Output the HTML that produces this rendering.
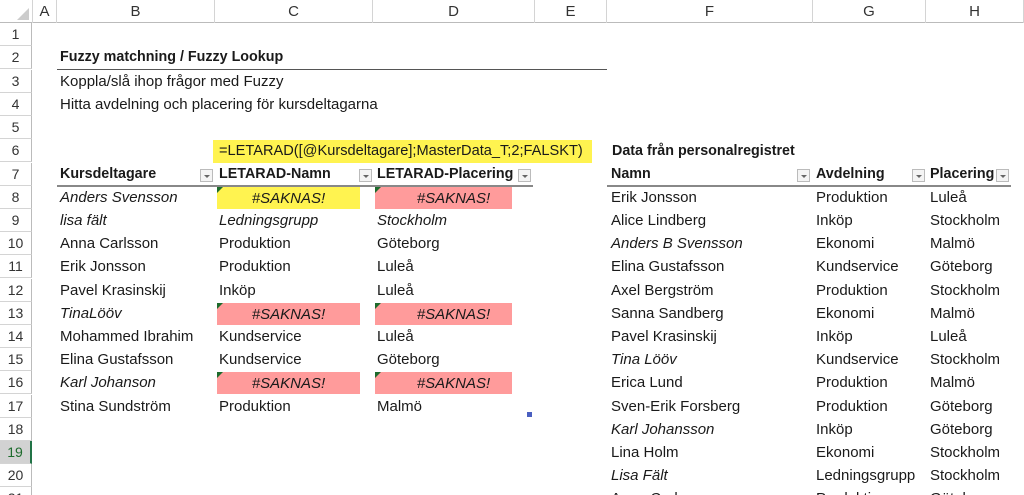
<!DOCTYPE html>
<html><head><meta charset="utf-8"><style>
html,body{margin:0;width:1024px;height:495px;overflow:hidden}
body{background:#fff;font-family:"Liberation Sans",sans-serif;font-size:15px;color:#1a1a1a;position:relative}
.c{position:absolute;height:23px;line-height:23px;white-space:nowrap}
.h{position:absolute;top:0;height:23px;line-height:24px;text-align:center;font-size:15px;color:#333;border-right:1px solid #d4d4d4;box-sizing:border-box}
.r{position:absolute;left:0;width:32px;height:23px;line-height:23px;text-align:center;font-size:14px;color:#333;border-bottom:1px solid #d4d4d4;border-right:1px solid #bbb;box-sizing:border-box;background:#fff}
.b{font-weight:bold;font-size:14.3px}.i{font-style:italic}
.y{background:#fff350}.p{background:#ff9b9b}
.f{position:absolute;width:13px;height:13px;border:1px solid #bbb;background:#f4f4f4;box-sizing:border-box}
.f:after{content:"";position:absolute;left:3px;top:5px;border-left:3px solid transparent;border-right:3px solid transparent;border-top:3px solid #666}
.t{position:absolute;width:0;height:0;border-top:6px solid #1d6b2c;border-right:6px solid transparent}
</style></head><body>
<div style="position:absolute;left:0;top:0;width:1024px;height:23px;border-bottom:1px solid #bbb;box-sizing:border-box"></div>
<div class="h" style="left:0;width:33px"><div style="position:absolute;right:3px;bottom:3px;border-left:12px solid transparent;border-bottom:12px solid #ccc"></div></div>
<div class="h" style="left:33px;width:24px">A</div>
<div class="h" style="left:57px;width:158px">B</div>
<div class="h" style="left:215px;width:158px">C</div>
<div class="h" style="left:373px;width:162px">D</div>
<div class="h" style="left:535px;width:72px">E</div>
<div class="h" style="left:607px;width:206px">F</div>
<div class="h" style="left:813px;width:113px">G</div>
<div class="h" style="left:926px;width:98px">H</div>

<div class="r" style="top:23px">1</div><div class="r" style="top:46px">2</div><div class="r" style="top:70px">3</div><div class="r" style="top:93px">4</div><div class="r" style="top:116px">5</div><div class="r" style="top:139px">6</div><div class="r" style="top:163px">7</div><div class="r" style="top:186px">8</div><div class="r" style="top:209px">9</div><div class="r" style="top:232px">10</div><div class="r" style="top:255px">11</div><div class="r" style="top:279px">12</div><div class="r" style="top:302px">13</div><div class="r" style="top:325px">14</div><div class="r" style="top:348px">15</div><div class="r" style="top:371px">16</div><div class="r" style="top:395px">17</div><div class="r" style="top:418px">18</div><div class="r" style="top:441px;background:#d2d2d2;color:#1d6b2c;border-right:2px solid #217346">19</div><div class="r" style="top:464px">20</div><div class="r" style="top:487px">21</div>

<div class="c b" style="left:60px;top:46px">Fuzzy matchning / Fuzzy Lookup</div>
<div style="position:absolute;left:57px;top:69px;width:550px;height:1px;background:#555"></div>
<div class="c" style="left:60px;top:70px">Koppla/slå ihop frågor med Fuzzy</div>
<div class="c" style="left:60px;top:93px">Hitta avdelning och placering för kursdeltagarna</div>
<div class="c y" style="left:213px;top:140px;width:379px;padding-left:6px;box-sizing:border-box;font-size:14.6px">=LETARAD([@Kursdeltagare];MasterData_T;2;FALSKT)</div>
<div class="c b" style="left:612px;top:140px">Data från personalregistret</div>

<div class="c b" style="left:60px;top:163px">Kursdeltagare</div>
<div class="c b" style="left:219px;top:163px">LETARAD-Namn</div>
<div class="c b" style="left:377px;top:163px">LETARAD-Placering</div>
<div class="f" style="left:200px;top:169px"></div><div class="f" style="left:359px;top:169px"></div><div class="f" style="left:518px;top:169px"></div>
<div style="position:absolute;left:57px;top:185px;width:476px;height:2px;background:#888"></div>
<div class="c b" style="left:611px;top:163px">Namn</div>
<div class="c b" style="left:816px;top:163px">Avdelning</div>
<div class="c b" style="left:930px;top:163px">Placering</div>
<div class="f" style="left:797px;top:169px"></div><div class="f" style="left:912px;top:169px"></div><div class="f" style="left:996px;top:169px"></div>
<div style="position:absolute;left:607px;top:185px;width:404px;height:2px;background:#888"></div>

<div class="c i" style="left:60px;top:186px">Anders Svensson</div>
<div class="c i y" style="left:217px;top:187px;width:143px;height:22px;text-align:center">#SAKNAS!</div>
<div class="c i p" style="left:375px;top:187px;width:137px;height:22px;text-align:center;padding-left:20px;box-sizing:border-box">#SAKNAS!</div>
<div class="c i" style="left:60px;top:209px">lisa fält</div>
<div class="c i" style="left:219px;top:209px">Ledningsgrupp</div>
<div class="c i" style="left:377px;top:209px">Stockholm</div>
<div class="c" style="left:60px;top:232px">Anna Carlsson</div><div class="c" style="left:219px;top:232px">Produktion</div><div class="c" style="left:377px;top:232px">Göteborg</div>
<div class="c" style="left:60px;top:255px">Erik Jonsson</div><div class="c" style="left:219px;top:255px">Produktion</div><div class="c" style="left:377px;top:255px">Luleå</div>
<div class="c" style="left:60px;top:279px">Pavel Krasinskij</div><div class="c" style="left:219px;top:279px">Inköp</div><div class="c" style="left:377px;top:279px">Luleå</div>
<div class="c i" style="left:60px;top:302px">TinaLööv</div>
<div class="c i p" style="left:217px;top:303px;width:143px;height:22px;text-align:center">#SAKNAS!</div>
<div class="c i p" style="left:375px;top:303px;width:137px;height:22px;text-align:center;padding-left:20px;box-sizing:border-box">#SAKNAS!</div>
<div class="c" style="left:60px;top:325px">Mohammed Ibrahim</div><div class="c" style="left:219px;top:325px">Kundservice</div><div class="c" style="left:377px;top:325px">Luleå</div>
<div class="c" style="left:60px;top:348px">Elina Gustafsson</div><div class="c" style="left:219px;top:348px">Kundservice</div><div class="c" style="left:377px;top:348px">Göteborg</div>
<div class="c i" style="left:60px;top:371px">Karl Johanson</div>
<div class="c i p" style="left:217px;top:372px;width:143px;height:22px;text-align:center">#SAKNAS!</div>
<div class="c i p" style="left:375px;top:372px;width:137px;height:22px;text-align:center;padding-left:20px;box-sizing:border-box">#SAKNAS!</div>
<div class="c" style="left:60px;top:395px">Stina Sundström</div><div class="c" style="left:219px;top:395px">Produktion</div><div class="c" style="left:377px;top:395px">Malmö</div>
<div class="t" style="left:217px;top:187px"></div><div class="t" style="left:375px;top:187px"></div>
<div class="t" style="left:217px;top:303px"></div><div class="t" style="left:375px;top:303px"></div>
<div class="t" style="left:217px;top:372px"></div><div class="t" style="left:375px;top:372px"></div>
<div style="position:absolute;left:527px;top:412px;width:5px;height:5px;background:#4a5fc0"></div>

<div class="c" style="left:611px;top:186px">Erik Jonsson</div><div class="c" style="left:816px;top:186px">Produktion</div><div class="c" style="left:930px;top:186px">Luleå</div>
<div class="c" style="left:611px;top:209px">Alice Lindberg</div><div class="c" style="left:816px;top:209px">Inköp</div><div class="c" style="left:930px;top:209px">Stockholm</div>
<div class="c i" style="left:611px;top:232px">Anders B Svensson</div><div class="c" style="left:816px;top:232px">Ekonomi</div><div class="c" style="left:930px;top:232px">Malmö</div>
<div class="c" style="left:611px;top:255px">Elina Gustafsson</div><div class="c" style="left:816px;top:255px">Kundservice</div><div class="c" style="left:930px;top:255px">Göteborg</div>
<div class="c" style="left:611px;top:279px">Axel Bergström</div><div class="c" style="left:816px;top:279px">Produktion</div><div class="c" style="left:930px;top:279px">Stockholm</div>
<div class="c" style="left:611px;top:302px">Sanna Sandberg</div><div class="c" style="left:816px;top:302px">Ekonomi</div><div class="c" style="left:930px;top:302px">Malmö</div>
<div class="c" style="left:611px;top:325px">Pavel Krasinskij</div><div class="c" style="left:816px;top:325px">Inköp</div><div class="c" style="left:930px;top:325px">Luleå</div>
<div class="c i" style="left:611px;top:348px">Tina Lööv</div><div class="c" style="left:816px;top:348px">Kundservice</div><div class="c" style="left:930px;top:348px">Stockholm</div>
<div class="c" style="left:611px;top:371px">Erica Lund</div><div class="c" style="left:816px;top:371px">Produktion</div><div class="c" style="left:930px;top:371px">Malmö</div>
<div class="c" style="left:611px;top:395px">Sven-Erik Forsberg</div><div class="c" style="left:816px;top:395px">Produktion</div><div class="c" style="left:930px;top:395px">Göteborg</div>
<div class="c i" style="left:611px;top:418px">Karl Johansson</div><div class="c" style="left:816px;top:418px">Inköp</div><div class="c" style="left:930px;top:418px">Göteborg</div>
<div class="c" style="left:611px;top:441px">Lina Holm</div><div class="c" style="left:816px;top:441px">Ekonomi</div><div class="c" style="left:930px;top:441px">Stockholm</div>
<div class="c i" style="left:611px;top:464px">Lisa Fält</div><div class="c" style="left:816px;top:464px">Ledningsgrupp</div><div class="c" style="left:930px;top:464px">Stockholm</div>
<div class="c" style="left:611px;top:487px">Anna Carlsson</div><div class="c" style="left:816px;top:487px">Produktion</div><div class="c" style="left:930px;top:487px">Göteborg</div>
</body></html>
